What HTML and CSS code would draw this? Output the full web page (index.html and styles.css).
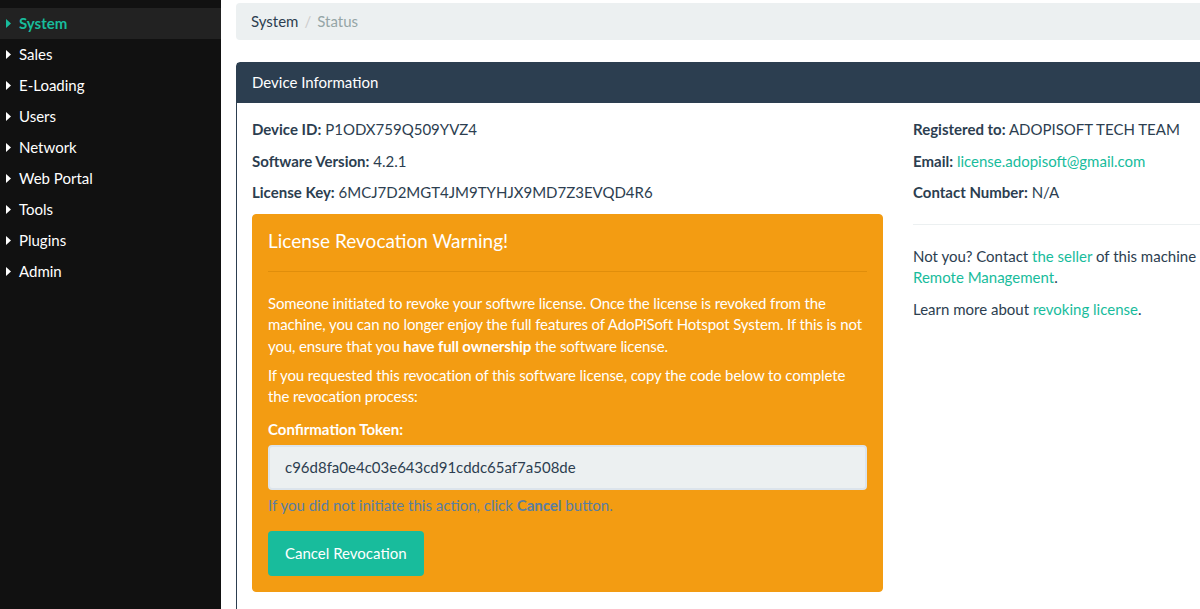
FILE: index.html
```
<!DOCTYPE html>
<html>
<head>
<meta charset="utf-8">
<link rel="stylesheet" href="styles.css">
</head>
<body>
<aside class="sidebar">
  <nav class="nav">
    <a class="nav-item active"><svg class="caret" viewBox="0 0 5 9"><path d="M0 0L5 4.5L0 9Z"/></svg>System</a>
    <a class="nav-item"><svg class="caret" viewBox="0 0 5 9"><path d="M0 0L5 4.5L0 9Z"/></svg>Sales</a>
    <a class="nav-item"><svg class="caret" viewBox="0 0 5 9"><path d="M0 0L5 4.5L0 9Z"/></svg>E-Loading</a>
    <a class="nav-item"><svg class="caret" viewBox="0 0 5 9"><path d="M0 0L5 4.5L0 9Z"/></svg>Users</a>
    <a class="nav-item"><svg class="caret" viewBox="0 0 5 9"><path d="M0 0L5 4.5L0 9Z"/></svg>Network</a>
    <a class="nav-item"><svg class="caret" viewBox="0 0 5 9"><path d="M0 0L5 4.5L0 9Z"/></svg>Web Portal</a>
    <a class="nav-item"><svg class="caret" viewBox="0 0 5 9"><path d="M0 0L5 4.5L0 9Z"/></svg>Tools</a>
    <a class="nav-item"><svg class="caret" viewBox="0 0 5 9"><path d="M0 0L5 4.5L0 9Z"/></svg>Plugins</a>
    <a class="nav-item"><svg class="caret" viewBox="0 0 5 9"><path d="M0 0L5 4.5L0 9Z"/></svg>Admin</a>
  </nav>
</aside>
<main class="main">
  <ol class="breadcrumb">
    <li>System</li>
    <li class="sep">/</li>
    <li class="current">Status</li>
  </ol>
  <section class="panel">
    <div class="panel-heading">Device Information</div>
    <div class="panel-body">
      <div class="col-left">
        <p><b>Device ID:</b> P1ODX759Q509YVZ4</p>
        <p><b>Software Version:</b> 4.2.1</p>
        <p><b>License Key:</b> 6MCJ7D2MGT4JM9TYHJX9MD7Z3EVQD4R6</p>
        <div class="alert">
          <h4 class="alert-title">License Revocation Warning!</h4>
          <hr class="alert-hr">
          <p class="alert-text">Someone initiated to revoke your softwre license. Once the license is revoked from the<br>machine, you can no longer enjoy the full features of AdoPiSoft Hotspot System. If this is not<br>you, ensure that you <b>have full ownership</b> the software license.</p>
          <p class="alert-text">If you requested this revocation of this software license, copy the code below to complete<br>the revocation process:</p>
          <label class="label">Confirmation Token:</label>
          <div class="token">c96d8fa0e4c03e643cd91cddc65af7a508de</div>
          <p class="help">If you did not initiate this action, click <b>Cancel</b> button.</p>
          <button class="btn">Cancel Revocation</button>
        </div>
      </div>
      <div class="col-right">
        <p><b>Registered to:</b> ADOPISOFT TECH TEAM</p>
        <p><b>Email:</b> <a class="link">license.adopisoft@gmail.com</a></p>
        <p><b>Contact Number:</b> N/A</p>
        <hr class="divider">
        <p class="nowrap">Not you? Contact <a class="link">the seller</a> of this machine now or via<br><a class="link">Remote Management</a>.</p>
        <p>Learn more about <a class="link">revoking license</a>.</p>
      </div>
    </div>
  </section>
</main>
</body>
</html>
```
FILE: styles.css
```
html, body {
  margin: 0;
  padding: 0;
  width: 1200px;
  height: 609px;
  overflow: hidden;
}
body {
  display: flex;
  font-family: Lato, "Open Sans", sans-serif;
  font-size: 15px;
  line-height: 21.4px;
  color: #2c3e50;
  background: #fff;
}
.sidebar {
  flex: 0 0 221px;
  background: #111;
  padding-top: 8px;
}
.nav {
  display: flex;
  flex-direction: column;
}
.nav-item {
  display: flex;
  align-items: center;
  height: 31px;
  padding-left: 6px;
  color: #fff;
  font-size: 15px;
}
.nav-item.active {
  background: #222;
  color: #18bc9c;
  font-weight: bold;
}
.caret {
  width: 5px;
  height: 9px;
  margin-right: 8px;
  fill: #fff;
}
.active .caret {
  fill: #18bc9c;
}
.main {
  flex: 0 0 1040px;
  padding: 3px 0 0 15px;
}
.breadcrumb {
  list-style: none;
  margin: 0 0 22px;
  padding: 0 15px;
  height: 37px;
  display: flex;
  align-items: center;
  gap: 6px;
  background: #ecf0f1;
  border-radius: 4px;
}
.breadcrumb .sep {
  color: #ccc;
}
.breadcrumb .current {
  color: #95a5a6;
}
.panel {
  border: 1px solid #2c3e50;
  border-radius: 4px;
  height: 600px;
}
.panel-heading {
  background: #2c3e50;
  color: #fff;
  padding: 9px 15px 10px;
  line-height: 21px;
}
.panel-body {
  padding: 16px 15px 15px;
  display: grid;
  grid-template-columns: 631px 1fr;
  column-gap: 30px;
}
.col-left > p,
.col-right > p {
  line-height: 21.6px;
}
p {
  margin: 0 0 10px;
}
.link {
  color: #18bc9c;
}
.alert {
  margin-top: 10px;
  background: #f39c12;
  border: 1px solid #f39c12;
  border-radius: 4px;
  padding: 15px;
  color: #fff;
}
.alert-title {
  margin: 0;
  font-size: 19px;
  font-weight: normal;
  line-height: 21px;
}
.alert-hr {
  border: 0;
  border-top: 1px solid #e08e0b;
  margin: 20px 0 21px;
}
.alert-text {
  margin-bottom: 8px;
  letter-spacing: -0.12px;
  white-space: nowrap;
}
.label {
  display: block;
  font-weight: bold;
  margin: 11px 0 5px;
}
.token {
  height: 45px;
  box-sizing: border-box;
  background: #ecf0f1;
  border: 2px solid #dce4ec;
  border-radius: 4px;
  padding: 0 15px;
  display: flex;
  align-items: center;
  color: #2c3e50;
}
.help {
  color: #597ea2;
  margin: 5px 0 14px;
}
.btn {
  display: block;
  height: 45px;
  padding: 0 17px;
  border: 0;
  border-radius: 4px;
  background: #18bc9c;
  color: #fff;
  font-family: inherit;
  font-size: 15px;
}
.divider {
  border: 0;
  border-top: 1px solid #ecf0f1;
  margin: 20px 0 21px;
}
.nowrap {
  white-space: nowrap;
}
```
